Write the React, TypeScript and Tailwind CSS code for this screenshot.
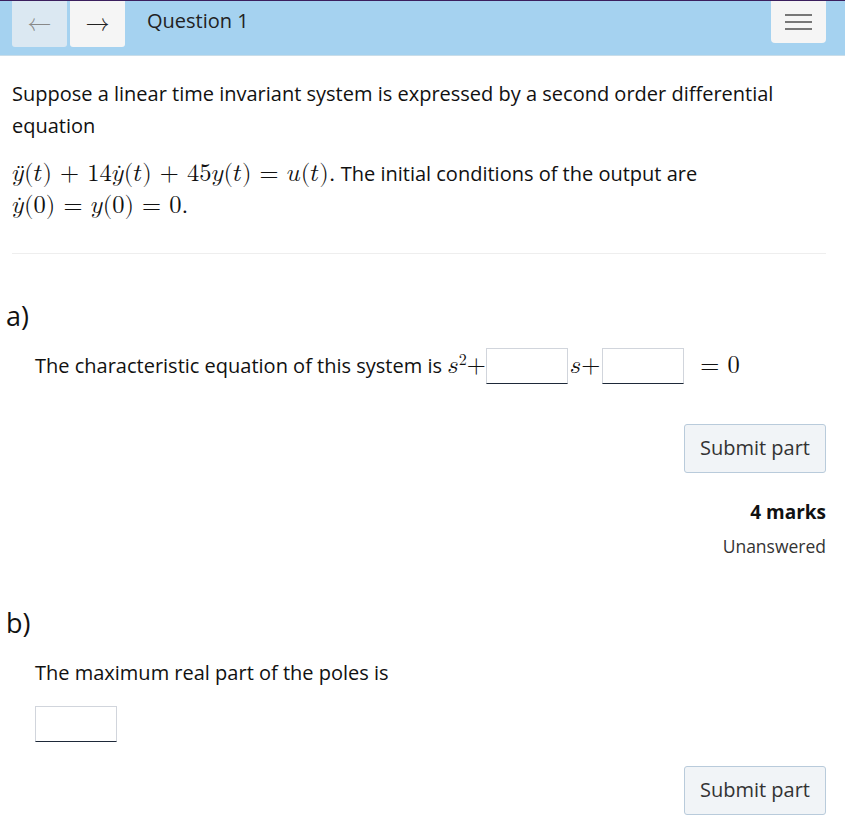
import React from 'react';

const sans = { fontFamily: '"Source Sans Pro", "Open Sans", "Liberation Sans", sans-serif' };

function M({ children }: { children: React.ReactNode }) {
  return (
    <span className="font-['Latin_Modern_Math','DejaVu_Serif',serif] text-[24.5px]">
      {children}
    </span>
  );
}

// dotted variable (y with one or two dots over it)
function Dot({ n = 1 }: { n?: number }) {
  return (
    <span className="relative inline-block">
      𝑦
      <span className="absolute left-[3px] right-0 top-[4px] text-center text-[22px] leading-none">
        {n === 2 ? '¨' : '˙'}
      </span>
    </span>
  );
}

function Box() {
  return (
    <span className="inline-block h-[36px] w-[82px] border border-gray-300 border-b-gray-800 bg-white align-middle" />
  );
}

function SubmitPart() {
  return (
    <div className="flex justify-end">
      <button className="h-[49px] rounded-[3px] border border-[#b9cbdb] bg-[#f1f4f7] px-[15px] text-[20px] text-[#333]">
        Submit part
      </button>
    </div>
  );
}

export default function App() {
  return (
    <div className="min-h-screen bg-white text-[20px] text-[#111]" style={sans}>
      {/* top bar */}
      <div className="flex h-[56px] items-start border-t border-[#3b1f5e] border-b border-b-[#c9dde9] bg-[#a5d2f0] pl-[12px] pr-[19px]">
        <button className="h-[46px] w-[55px] rounded-b-[3px] bg-[#dbe8f2] font-['Latin_Modern_Math',serif] text-[24px] text-[#888]">
          ←
        </button>
        <button className="ml-[3px] h-[46px] w-[55px] rounded-b-[3px] bg-[#f5f5f5] font-['Latin_Modern_Math',serif] text-[24px] text-[#222]">
          →
        </button>
        <div className="ml-[22px] mt-[5px] text-[20px] text-[#222]">Question 1</div>
        <button className="ml-auto flex h-[42px] w-[55px] flex-col items-center justify-center gap-[5px] rounded-b-[4px] bg-[#f5f5f5]">
          <span className="block h-[2px] w-[27px] bg-[#777]" />
          <span className="block h-[2px] w-[27px] bg-[#777]" />
          <span className="block h-[2px] w-[27px] bg-[#777]" />
        </button>
      </div>

      <div className="pl-[12px] pr-[19px] pt-[22px]">
        <p className="leading-[32px]">
          Suppose a linear time invariant system is expressed by a second order differential equation
        </p>
        <p className="mt-[16px] leading-[32px]">
          <M>
            <Dot n={2} />(𝑡) + 14<Dot />(𝑡) + 45𝑦(𝑡) = 𝑢(𝑡).
          </M>{' '}
          The initial conditions of the output are
          <br />
          <M>
            <Dot />(0) = 𝑦(0) = 0.
          </M>
        </p>
        <hr className="mt-[31px] border-t border-[#eee]" />
      </div>

      {/* part a */}
      <div className="pr-[19px]">
        <div className="mt-[44px] pl-[6px] text-[27px] leading-[36px]">a)</div>
        <div className="mt-[14px] flex items-center pl-[35px]">
          <span>The characteristic equation of this system is&nbsp;</span>
          <M>
            𝑠<sup className="text-[16px]">2</sup>+
          </M>
          <Box />
          <M>
            <span className="px-[2px]">𝑠+</span>
          </M>
          <Box />
          <M>
            <span className="ml-[16px]">= 0</span>
          </M>
        </div>
        <div className="mt-[39px]">
          <SubmitPart />
        </div>
        <div className="mt-[24px] text-right text-[19px] font-bold leading-[30px]">4 marks</div>
        <div className="mt-[4px] text-right text-[17.5px] leading-[30px] text-[#333]">Unanswered</div>

        {/* part b */}
        <div className="mt-[44px] pl-[6px] text-[27px] leading-[36px]">b)</div>
        <div className="mt-[17px] pl-[35px] leading-[30px]">The maximum real part of the poles is</div>
        <div className="mt-[18px] pl-[35px]">
          <Box />
        </div>
        <div className="mt-[24px]">
          <SubmitPart />
        </div>
      </div>
    </div>
  );
}
